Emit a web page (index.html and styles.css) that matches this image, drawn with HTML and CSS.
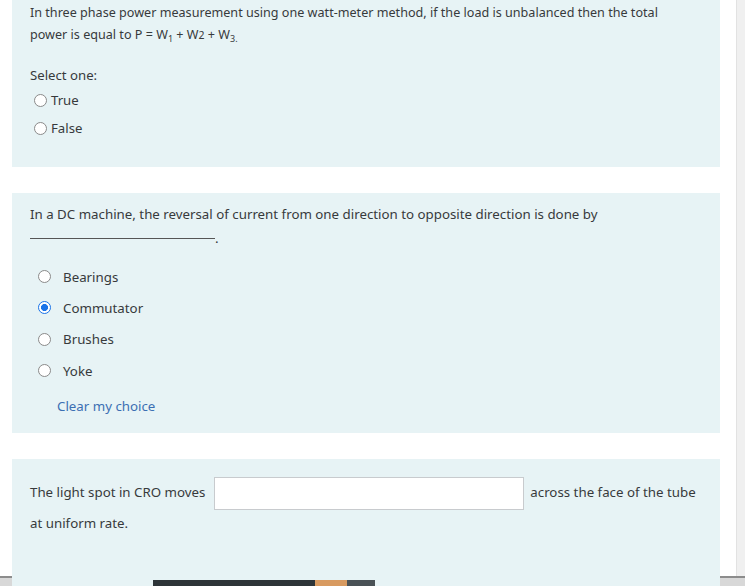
FILE: index.html
```html
<!DOCTYPE html>
<html>
<head>
<meta charset="utf-8">
<link rel="stylesheet" href="styles.css">
</head>
<body>
<div class="page">
  <main class="content">
    <section class="que q1">
      <p class="qtext">In three phase power measurement using one watt-meter method, if the load is unbalanced then the total power is equal to P = W<sub class="s1">1</sub> + W<span class="w2">2</span> + W<sub class="s3">3.</sub></p>
      <div class="prompt">Select one:</div>
      <div class="opts small">
        <label class="opt"><span class="radio"></span>True</label>
        <label class="opt"><span class="radio"></span>False</label>
      </div>
    </section>
    <section class="que q2">
      <p class="qtext2">In a DC machine, the reversal of current from one direction to opposite direction is done by</p>
      <p class="blank"><span class="line"></span>.</p>
      <div class="opts big">
        <label class="opt"><span class="radio"></span>Bearings</label>
        <label class="opt"><span class="radio checked"></span>Commutator</label>
        <label class="opt"><span class="radio"></span>Brushes</label>
        <label class="opt"><span class="radio"></span>Yoke</label>
      </div>
      <a class="clear">Clear my choice</a>
    </section>
    <section class="que q3">
      <p class="fill">The light spot in CRO moves <span class="input"></span> across the face of the tube at uniform rate.</p>
    </section>
  </main>
  <div class="scroll"></div>
</div>
<div class="taskbar">
  <span class="tb-a"></span><span class="tb-b"></span><span class="tb-c"></span><span class="tb-d"></span>
</div>
</body>
</html>
```

FILE: styles.css
```css
* { box-sizing: border-box; }
html, body { margin: 0; padding: 0; }
body {
  width: 745px; height: 586px; overflow: hidden;
  background: #fff;
  font-family: "Noto Sans", "Open Sans", sans-serif;
  font-size: 13.3px;
  color: #373a3c;
}
.page { display: flex; height: 576px; }
.content { width: 736px; padding: 0 16px 0 12px; }
.scroll { width: 9px; background: #f0f0f0; border-left: 1px solid #e2e2e2; }
.que { background: #e7f3f5; padding: 0 18px; margin-bottom: 26px; }
.q1 { height: 167px; padding-top: 2px; }
.q2 { height: 240px; padding-top: 10px; }
.q3 { height: 140px; padding-top: 18px; }
p { margin: 0; }
.qtext { line-height: 22px; font-size: 12.6px; max-width: 665px; }
.s1, .s3 { font-size: 9px; vertical-align: -3px; line-height: 1; }
.w2 { font-size: 10.5px; }
.prompt { margin-top: 18px; line-height: 22px; font-size: 13.2px; }
.opts.small { padding-left: 4px; font-size: 13.2px; }
.opt { display: flex; align-items: center; }
.small .opt { height: 28px; }
.small .radio { margin-right: 4px; }
.radio {
  width: 13px; height: 13px; border-radius: 50%;
  border: 1px solid #8a8a8a; background: #fff;
  display: inline-block; flex: none;
}
.radio.checked {
  border: 1px solid #1a73e8;
  background: radial-gradient(circle, #1a73e8 0 3.2px, #fff 3.8px);
}
.qtext2 { line-height: 22px; }
.blank { height: 26px; line-height: 26px; }
.line { display: inline-block; width: 185px; border-bottom: 1px solid #555; vertical-align: 4px; }
.opts.big { padding-left: 8px; margin-top: 10px; }
.big .opt { height: 31.3px; }
.big .radio { margin-right: 12px; }
.clear { display: block; color: #3b6fb3; margin: 10px 0 0 27px; line-height: 20px; }
.fill { line-height: 27px; max-width: 672px; }
.input {
  display: inline-block; width: 310px; height: 33px;
  border: 1px solid #c8cbce; background: #fff;
  vertical-align: middle; margin: 0 3px 0 5px;
}
.taskbar {
  height: 10px; background: #d8d8d8; border-top: 2px solid #8c8c8c;
  display: flex; align-items: flex-end;
}
.tb-a { width: 153px; }
.tb-b { width: 162px; height: 6px; background: #2d3438; }
.tb-c { width: 32px; height: 6px; background: #d89a60; }
.tb-d { width: 28px; height: 6px; background: #4a5256; }
```
